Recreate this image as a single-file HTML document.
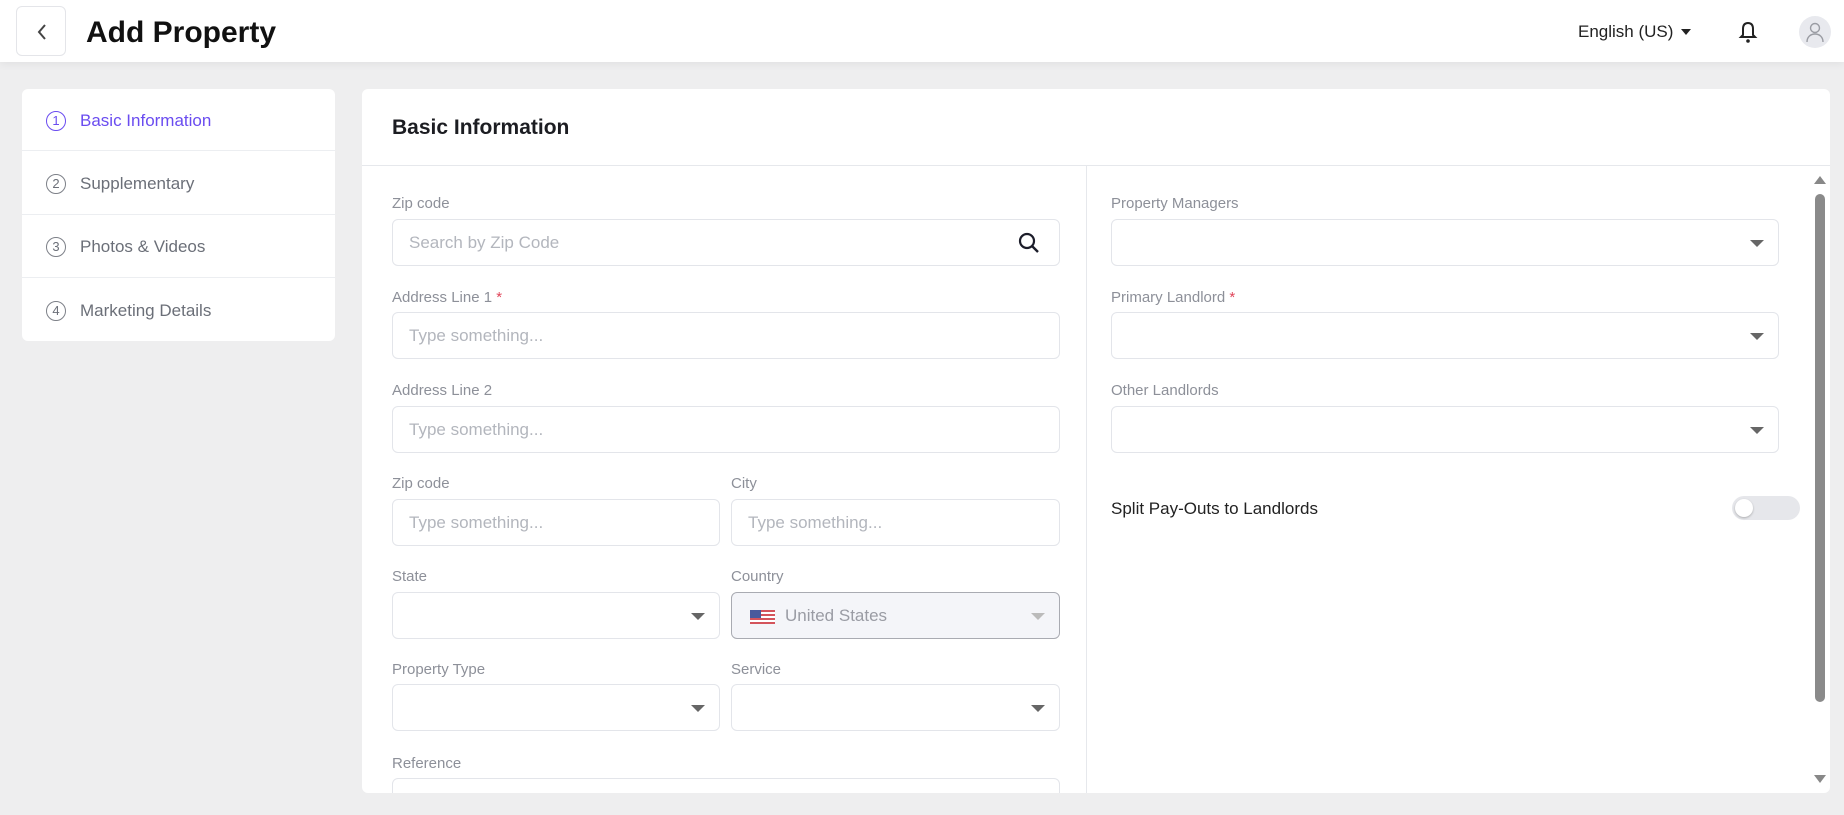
<!DOCTYPE html>
<html><head><meta charset="utf-8"><style>
*{box-sizing:border-box;margin:0;padding:0}
body{width:1844px;height:815px;background:#eeeeef;font-family:"Liberation Sans",sans-serif;position:relative;overflow:hidden}
.abs{position:absolute}
.hdr{left:0;top:0;width:1844px;height:62px;background:#fff;box-shadow:0 2px 8px rgba(0,0,0,.06)}
.back{left:16px;top:6px;width:50px;height:50px;border:1px solid #e4e5e9;border-radius:6px;background:#fff}
.title{left:86px;top:16px;font-size:30px;font-weight:bold;color:#111}
.card{background:#fff;border-radius:6px}
.item{position:absolute;left:0;width:313px;height:63px;border-bottom:1px solid #eceef1;font-size:17px;color:#6b6f78}
.item .c{position:absolute;left:24px;top:50%;margin-top:-9px;width:20px;height:20px;border:1.3px solid #7d8088;border-radius:50%;font-size:13px;text-align:center;line-height:18px}
.item .t{position:absolute;left:58px;top:50%;margin-top:-9px}
.lbl{font-size:15px;color:#8d9099}
.inp{border:1px solid #e3e5ea;border-radius:6px;background:#fff;height:47px;font-size:17px;color:#b3b6bd;padding:13px 16px}
.req{color:#e0455a}
.caret{position:absolute;right:14px;top:20px;width:0;height:0;border-left:7px solid transparent;border-right:7px solid transparent;border-top:7px solid #666}
</style></head><body>
<div class="abs hdr"></div>
<div class="abs back"><svg width="50" height="50" viewBox="0 0 50 50"><path d="M28 18l-6 7 6 7" stroke="#444" stroke-width="2" fill="none"/></svg></div>
<div class="abs title">Add Property</div>
<div class="abs" style="left:1578px;top:22px;font-size:17px;color:#222">English (US)</div>
<div class="abs" style="left:1681px;top:29px;border-left:5px solid transparent;border-right:5px solid transparent;border-top:6px solid #222"></div>
<svg class="abs" style="left:1737px;top:20px" width="22" height="24" viewBox="0 0 22 24"><path d="M11 3c-4 0-5 3-5 6v6l-2 2h14l-2-2V9c0-3-1-6-5-6z" fill="none" stroke="#222" stroke-width="2"/><circle cx="11" cy="21" r="1.8" fill="#222"/></svg>
<div class="abs" style="left:1799px;top:16px;width:32px;height:32px;border-radius:50%;background:#e8e9ee"><svg width="32" height="32" viewBox="0 0 32 32"><circle cx="16" cy="12" r="4.5" fill="none" stroke="#9a9ca3" stroke-width="1.4"/><path d="M8 26c0-5 3.5-8 8-8s8 3 8 8" fill="none" stroke="#9a9ca3" stroke-width="1.4"/></svg></div>

<div class="abs card" style="left:22px;top:89px;width:313px;height:252px;overflow:hidden">
<div class="item" style="top:0;height:62px;color:#6a4cf0"><span class="c" style="border-color:#6a4cf0">1</span><span class="t">Basic Information</span></div>
<div class="item" style="top:62px;height:64px"><span class="c">2</span><span class="t">Supplementary</span></div>
<div class="item" style="top:126px"><span class="c">3</span><span class="t">Photos &amp; Videos</span></div>
<div class="item" style="top:189px;border:none"><span class="c">4</span><span class="t">Marketing Details</span></div>
</div>

<div class="abs card" style="left:362px;top:89px;width:1468px;height:704px;overflow:hidden">
<div class="abs" style="left:30px;top:27px;font-size:21px;font-weight:bold;color:#1c1d22">Basic Information</div>
<div class="abs" style="left:0;top:76px;width:1468px;height:1px;background:#e6e8ec"></div>
<div class="abs" style="left:724px;top:77px;width:1px;height:640px;background:#e6e8ec"></div>
<div class="abs" style="left:30px;top:689px;width:668px;height:30px;border:1px solid #e3e5ea;border-radius:6px"></div>
</div>

<div class="abs lbl" style="left:392px;top:195px">Zip code</div>
<div class="abs inp" style="left:392px;top:219px;width:668px">Search by Zip Code<svg class="abs" style="right:18px;top:11px" width="24" height="24" viewBox="0 0 24 24"><circle cx="10" cy="10" r="7" fill="none" stroke="#1c1d2a" stroke-width="2.2"/><path d="M15 15l6 6" stroke="#1c1d2a" stroke-width="2.4"/></svg></div>
<div class="abs lbl" style="left:392px;top:289px">Address Line 1 <span class="req">*</span></div>
<div class="abs inp" style="left:392px;top:312px;width:668px">Type something...</div>
<div class="abs lbl" style="left:392px;top:382px">Address Line 2</div>
<div class="abs inp" style="left:392px;top:406px;width:668px">Type something...</div>
<div class="abs lbl" style="left:392px;top:475px">Zip code</div>
<div class="abs inp" style="left:392px;top:499px;width:328px">Type something...</div>
<div class="abs lbl" style="left:731px;top:475px">City</div>
<div class="abs inp" style="left:731px;top:499px;width:329px">Type something...</div>
<div class="abs lbl" style="left:392px;top:568px">State</div>
<div class="abs inp" style="left:392px;top:592px;width:328px"><span class="caret"></span></div>
<div class="abs lbl" style="left:731px;top:568px">Country</div>
<div class="abs inp" style="left:731px;top:592px;width:329px;background:#f4f5f9;border-color:#a9abb2;color:#9a9ca4;padding-left:53px"><span class="abs" style="left:18px;top:17px;width:25px;height:14px;background:repeating-linear-gradient(#d4545c 0 2px,#fff 2px 4px)"><span class="abs" style="left:0;top:0;width:11px;height:8px;background:#4a5a9c"></span></span>United States<span class="caret" style="border-top-color:#bbb"></span></div>
<div class="abs lbl" style="left:392px;top:661px">Property Type</div>
<div class="abs inp" style="left:392px;top:684px;width:328px"><span class="caret"></span></div>
<div class="abs lbl" style="left:731px;top:661px">Service</div>
<div class="abs inp" style="left:731px;top:684px;width:329px"><span class="caret"></span></div>
<div class="abs lbl" style="left:392px;top:755px">Reference</div>

<div class="abs lbl" style="left:1111px;top:195px">Property Managers</div>
<div class="abs inp" style="left:1111px;top:219px;width:668px"><span class="caret"></span></div>
<div class="abs lbl" style="left:1111px;top:289px">Primary Landlord <span class="req">*</span></div>
<div class="abs inp" style="left:1111px;top:312px;width:668px"><span class="caret"></span></div>
<div class="abs lbl" style="left:1111px;top:382px">Other Landlords</div>
<div class="abs inp" style="left:1111px;top:406px;width:668px"><span class="caret"></span></div>
<div class="abs" style="left:1111px;top:499px;font-size:17px;color:#222">Split Pay-Outs to Landlords</div>
<div class="abs" style="left:1732px;top:496px;width:68px;height:24px;border-radius:12px;background:#e6e7eb"><span class="abs" style="left:3px;top:3px;width:18px;height:18px;border-radius:50%;background:#fff;box-shadow:0 1px 2px rgba(0,0,0,.25)"></span></div>

<div class="abs" style="left:1814px;top:176px;border-left:6px solid transparent;border-right:6px solid transparent;border-bottom:8px solid #888"></div>
<div class="abs" style="left:1815px;top:194px;width:10px;height:508px;border-radius:5px;background:#8a8a8a"></div>
<div class="abs" style="left:1814px;top:775px;border-left:6px solid transparent;border-right:6px solid transparent;border-top:8px solid #888"></div>
</body></html>
